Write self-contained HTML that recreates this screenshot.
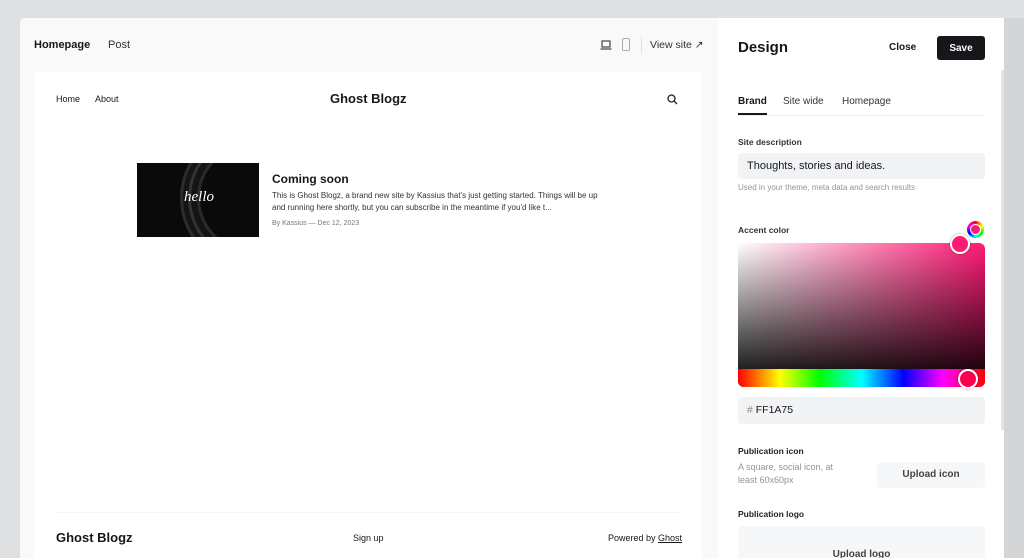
<!DOCTYPE html>
<html><head><style>
*{margin:0;padding:0;box-sizing:border-box}
html,body{width:1024px;height:558px;overflow:hidden}
body{background:#dfe0e2;font-family:"Liberation Sans",sans-serif;position:relative;color:#15171a}
.a{position:absolute}
</style></head><body>
<div class="a" style="left:1004px;top:18px;width:20px;height:540px;background:#d4d5d7"></div>
<div class="a" style="left:20px;top:18px;width:698px;height:540px;background:#f9f9f9;border-radius:4px 0 0 0"></div>
<div class="a" style="left:34px;top:39px;font-size:11px;font-weight:bold">Homepage</div>
<div class="a" style="left:108px;top:39px;font-size:11px;color:#333">Post</div>
<svg class="a" style="left:600px;top:39px" width="12" height="12" viewBox="0 0 12 12" fill="none" stroke="#333" stroke-width="1.1"><rect x="2" y="2" width="8" height="6"/><path d="M0.5 10h11"/></svg>
<svg class="a" style="left:622px;top:38px" width="8" height="13" viewBox="0 0 8 13" fill="none" stroke="#aaa" stroke-width="1"><rect x="0.5" y="0.5" width="7" height="12" rx="1.5"/></svg>
<div class="a" style="left:641px;top:37px;width:1px;height:16px;background:#ddd"></div>
<div class="a" style="left:650px;top:39px;font-size:10.5px;color:#333">View site ↗</div>
<div class="a" style="left:34px;top:72px;width:668px;height:490px;background:#fff;border-radius:3px"></div>
<div class="a" style="left:56px;top:94px;font-size:9px">Home</div>
<div class="a" style="left:95px;top:94px;font-size:9px">About</div>
<div class="a" style="left:330px;top:91px;font-size:13px;font-weight:bold">Ghost Blogz</div>
<svg class="a" style="left:667px;top:94px" width="11" height="11" viewBox="0 0 11 11" fill="none" stroke="#222" stroke-width="1.3"><circle cx="4.5" cy="4.5" r="3.5"/><path d="M7 7l3 3"/></svg>
<div class="a" style="left:137px;top:163px;width:122px;height:74px;overflow:hidden;background:#0a0a0a">
<div class="a" style="left:60px;top:-20px;width:110px;height:110px;border-radius:50%;border:3px solid #2a2a2a;box-shadow:0 0 0 6px #141414,0 0 0 9px #333,0 0 0 14px #151515,0 0 0 17px #2c2c2c"></div></div>
<div class="a" style="left:184px;top:189px;font-size:15px;color:#fff;font-style:italic;font-family:'Liberation Serif',serif">hello</div>
<div class="a" style="left:272px;top:172px;font-size:12px;font-weight:bold">Coming soon</div>
<div class="a" style="left:272px;top:190px;font-size:8px;line-height:12px;color:#333;width:330px">This is Ghost Blogz, a brand new site by Kassius that's just getting started. Things will be up and running here shortly, but you can subscribe in the meantime if you'd like t...</div>
<div class="a" style="left:272px;top:220px;font-size:7px;color:#777">By Kassius — Dec 12, 2023</div>
<div class="a" style="left:56px;top:512px;width:626px;height:1px;background:#f4f4f4"></div>
<div class="a" style="left:56px;top:530px;font-size:13px;font-weight:bold">Ghost Blogz</div>
<div class="a" style="left:353px;top:533px;font-size:9px">Sign up</div>
<div class="a" style="left:608px;top:533px;font-size:9px">Powered by <u>Ghost</u></div>

<div class="a" style="left:718px;top:18px;width:286px;height:540px;background:#fff"></div>
<div class="a" style="left:1001px;top:70px;width:3px;height:360px;background:#e4e4e4"></div>
<div class="a" style="left:738px;top:39px;font-size:15px;font-weight:bold">Design</div>
<div class="a" style="left:889px;top:42px;font-size:10px;font-weight:bold">Close</div>
<div class="a" style="left:937px;top:36px;width:48px;height:24px;background:#15171a;border-radius:3px;color:#fff;font-size:10px;font-weight:bold;display:flex;align-items:center;justify-content:center">Save</div>
<div class="a" style="left:738px;top:96px;font-size:10px;font-weight:bold">Brand</div>
<div class="a" style="left:783px;top:96px;font-size:10px;color:#333">Site wide</div>
<div class="a" style="left:842px;top:96px;font-size:10px;color:#333">Homepage</div>
<div class="a" style="left:738px;top:115px;width:247px;height:1px;background:#eee"></div>
<div class="a" style="left:738px;top:113px;width:29px;height:2px;background:#15171a"></div>
<div class="a" style="left:738px;top:137px;font-size:8.5px;font-weight:bold;color:#333">Site description</div>
<div class="a" style="left:738px;top:153px;width:247px;height:26px;background:#f2f3f4;border-radius:4px;font-size:11px;line-height:26px;padding-left:9px">Thoughts, stories and ideas.</div>
<div class="a" style="left:738px;top:183px;font-size:8px;color:#8e959c">Used in your theme, meta data and search results</div>
<div class="a" style="left:738px;top:225px;font-size:8.5px;font-weight:bold;color:#333">Accent color</div>
<div class="a" style="left:967px;top:221px;width:17px;height:17px;border-radius:50%;background:conic-gradient(red,yellow,lime,cyan,blue,magenta,red)"></div>
<div class="a" style="left:970px;top:224px;width:11px;height:11px;border-radius:50%;background:#ff1a75;border:1px solid #fff"></div>
<div class="a" style="left:738px;top:243px;width:247px;height:144px;border-radius:6px;overflow:hidden;background:linear-gradient(to bottom,rgba(0,0,0,0),#000),linear-gradient(to right,#fff,#ff1a75)">
<div class="a" style="left:0;top:126px;width:247px;height:18px;background:linear-gradient(to right,red,yellow 17%,lime 33%,cyan 50%,blue 67%,magenta 83%,red)"></div></div>
<div class="a" style="left:950px;top:234px;width:20px;height:20px;border-radius:50%;background:#ff1a75;border:2px solid #fff;box-shadow:0 0 2px rgba(0,0,0,.4)"></div>
<div class="a" style="left:958px;top:369px;width:20px;height:20px;border-radius:50%;background:#ff0050;border:2px solid #fff;box-shadow:0 0 2px rgba(0,0,0,.4)"></div>
<div class="a" style="left:738px;top:397px;width:247px;height:27px;background:#f2f3f4;border-radius:4px;font-size:10.5px;line-height:27px;padding-left:9px"><span style="color:#888">#</span> FF1A75</div>
<div class="a" style="left:738px;top:446px;font-size:8.5px;font-weight:bold;color:#222">Publication icon</div>
<div class="a" style="left:738px;top:461px;font-size:9px;line-height:13px;color:#8e959c;width:115px">A square, social icon, at least 60x60px</div>
<div class="a" style="left:877px;top:462px;width:108px;height:26px;background:#f6f7f8;border-radius:4px;font-size:10px;font-weight:bold;color:#444;text-align:center;line-height:26px">Upload icon</div>
<div class="a" style="left:738px;top:509px;font-size:8.5px;font-weight:bold;color:#222">Publication logo</div>
<div class="a" style="left:738px;top:526px;width:247px;height:40px;background:#f6f7f8;border-radius:4px;font-size:10px;font-weight:bold;color:#444;text-align:center;padding-top:23px">Upload logo</div>
</body></html>
